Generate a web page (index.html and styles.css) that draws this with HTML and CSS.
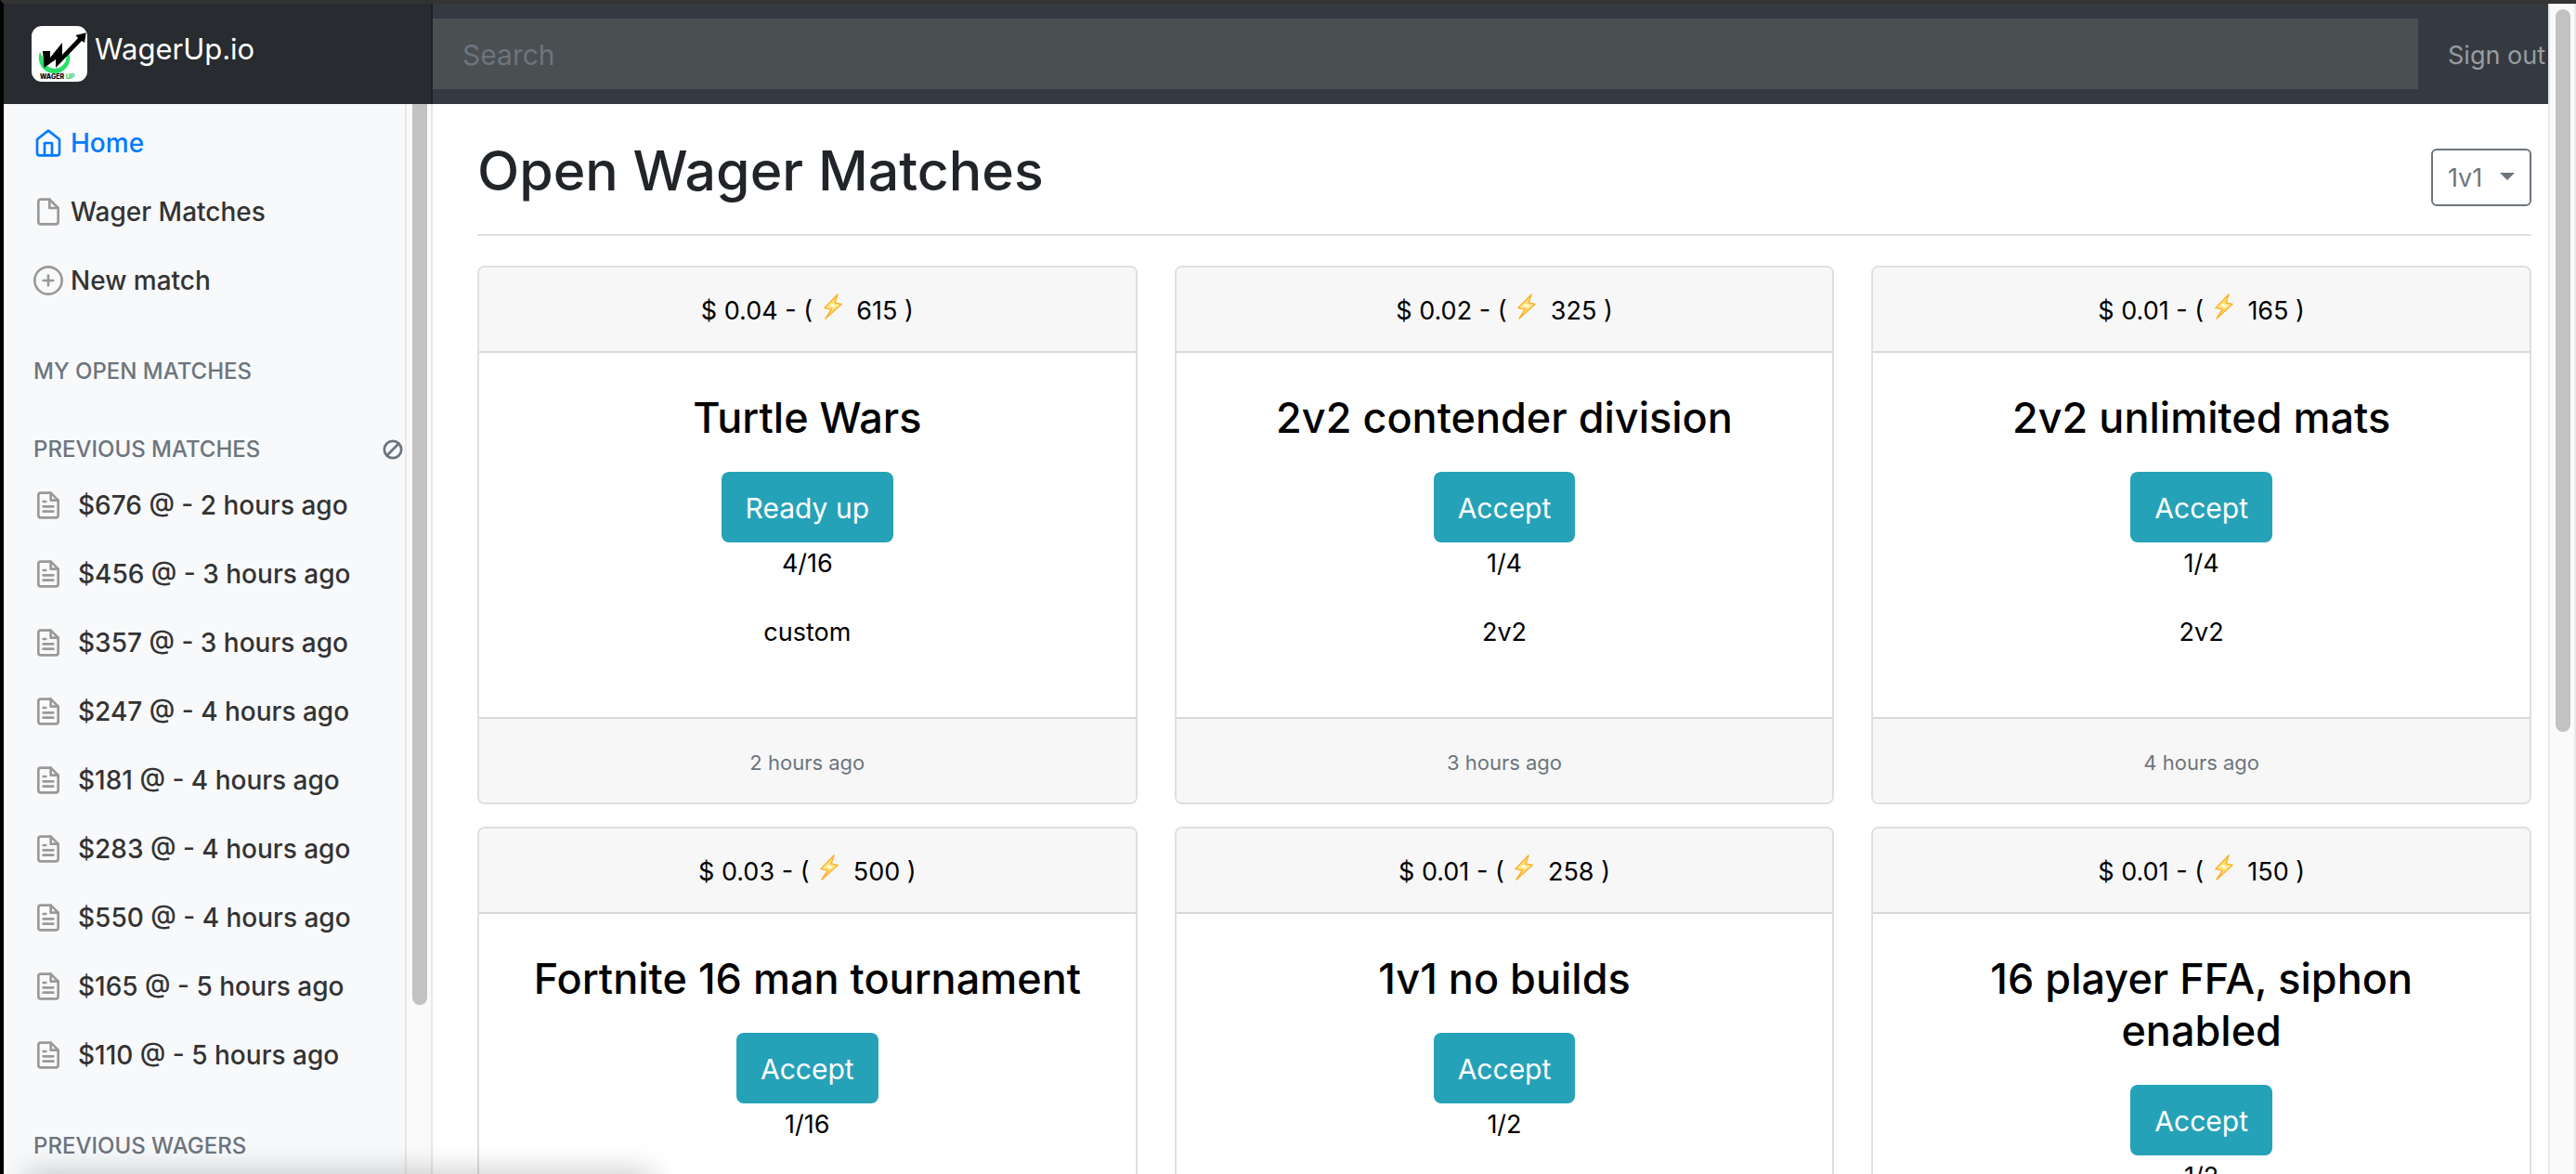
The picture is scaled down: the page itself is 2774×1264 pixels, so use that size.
FILE: index.html
```html
<!DOCTYPE html>
<html lang="en">
<head>
<meta charset="utf-8">
<title>WagerUp.io</title>
<link rel="stylesheet" href="styles.css">
</head>
<body>
<svg class="sprite" aria-hidden="true">
  <symbol id="i-home" viewBox="0 0 24 24"><path d="M3 9l9-7 9 7v11a2 2 0 0 1-2 2H5a2 2 0 0 1-2-2z"/><path d="M9 22V12h6v10"/></symbol>
  <symbol id="i-file" viewBox="0 0 24 24"><path d="M13 2H6a2 2 0 0 0-2 2v16a2 2 0 0 0 2 2h12a2 2 0 0 0 2-2V9z"/><path d="M13 2v7h7"/></symbol>
  <symbol id="i-plus" viewBox="0 0 24 24"><circle cx="12" cy="12" r="11"/><path d="M12 8v8M8 12h8"/></symbol>
  <symbol id="i-text" viewBox="0 0 24 24"><path d="M14 2H6a2 2 0 0 0-2 2v16a2 2 0 0 0 2 2h12a2 2 0 0 0 2-2V8z"/><path d="M14 2v6h6M16 13H8M16 17H8M10 9H8"/></symbol>
  <symbol id="i-slash" viewBox="0 0 24 24"><circle cx="12" cy="12" r="10"/><path d="M19 5L5 19"/></symbol>
  <symbol id="i-bolt" viewBox="0 0 20 28"><path d="M15 1L1 15.500l7.500 1.500L2 27 19 11.500l-7-1.500z" fill="#fff0a0" stroke="#fbb02d" stroke-width="1.500" stroke-linejoin="round"/><path d="M12 6l-6 8 5 1.500-3 5 6-7.500-4-2z" fill="#fffbe0" stroke="#ffd95a" stroke-width="1"/></symbol>
</svg>
<div class="window">
  <header class="navbar">
    <a class="brand" href="#">
      <svg class="logo" viewBox="0 0 60 60" role="img" aria-label="Wager Up">
        <rect width="60" height="60" rx="11" fill="#fff"/>
        <path d="M9 28a16.800 16.800 0 1 0 31.500 1l-3 3a12.500 12.500 0 1 1-25.500 2z" fill="#27e06a"/>
        <path d="M12 27h8v7l13-16v13l17-18-2.500-3 11.200-2.700L57 18l-3-2-28 29v-9L13.500 45z" fill="#000"/>
        <text x="9" y="57" class="logo-text">WAGER <tspan fill="#2fd472">UP</tspan></text>
      </svg>
      <span>WagerUp.io</span>
    </a>
    <input class="search" type="text" placeholder="Search" aria-label="Search">
    <a class="signout" href="#">Sign out</a>
  </header>
  <nav class="sidebar">
    <div class="sidebar-content">
      <ul class="menu">
        <li><a class="item active" href="#"><svg><use href="#i-home"/></svg>Home</a></li>
        <li><a class="item" href="#"><svg><use href="#i-file"/></svg>Wager Matches</a></li>
        <li><a class="item" href="#"><svg><use href="#i-plus"/></svg>New match</a></li>
      </ul>
      <h6 class="group">My open matches</h6>
      <h6 class="group">Previous matches<a href="#" aria-label="Clear"><svg><use href="#i-slash"/></svg></a></h6>
      <ul class="menu history">
        <li><a class="item" href="#"><svg><use href="#i-text"/></svg>$676 @ - 2 hours ago</a></li>
        <li><a class="item" href="#"><svg><use href="#i-text"/></svg>$456 @ - 3 hours ago</a></li>
        <li><a class="item" href="#"><svg><use href="#i-text"/></svg>$357 @ - 3 hours ago</a></li>
        <li><a class="item" href="#"><svg><use href="#i-text"/></svg>$247 @ - 4 hours ago</a></li>
        <li><a class="item" href="#"><svg><use href="#i-text"/></svg>$181 @ - 4 hours ago</a></li>
        <li><a class="item" href="#"><svg><use href="#i-text"/></svg>$283 @ - 4 hours ago</a></li>
        <li><a class="item" href="#"><svg><use href="#i-text"/></svg>$550 @ - 4 hours ago</a></li>
        <li><a class="item" href="#"><svg><use href="#i-text"/></svg>$165 @ - 5 hours ago</a></li>
        <li><a class="item" href="#"><svg><use href="#i-text"/></svg>$110 @ - 5 hours ago</a></li>
      </ul>
      <h6 class="group">Previous wagers</h6>
    </div>
    <div class="track"><div class="thumb"></div></div>
  </nav>
  <main class="main">
    <div class="page-head">
      <h1>Open Wager Matches</h1>
      <div class="mode">
        <select aria-label="Match type"><option>1v1</option></select>
      </div>
    </div>
    <div class="cards">
      <article class="card">
        <div class="card-header">$ 0.04 - ( <svg class="bolt"><use href="#i-bolt"/></svg> 615 )</div>
        <div class="card-body"><h4>Turtle Wars</h4><button type="button">Ready up</button><p>4/16</p><p>custom</p></div>
        <div class="card-footer">2 hours ago</div>
      </article>
      <article class="card">
        <div class="card-header">$ 0.02 - ( <svg class="bolt"><use href="#i-bolt"/></svg> 325 )</div>
        <div class="card-body"><h4>2v2 contender division</h4><button type="button">Accept</button><p>1/4</p><p>2v2</p></div>
        <div class="card-footer">3 hours ago</div>
      </article>
      <article class="card">
        <div class="card-header">$ 0.01 - ( <svg class="bolt"><use href="#i-bolt"/></svg> 165 )</div>
        <div class="card-body"><h4>2v2 unlimited mats</h4><button type="button">Accept</button><p>1/4</p><p>2v2</p></div>
        <div class="card-footer">4 hours ago</div>
      </article>
      <article class="card">
        <div class="card-header">$ 0.03 - ( <svg class="bolt"><use href="#i-bolt"/></svg> 500 )</div>
        <div class="card-body"><h4>Fortnite 16 man tournament</h4><button type="button">Accept</button><p>1/16</p></div>
      </article>
      <article class="card">
        <div class="card-header">$ 0.01 - ( <svg class="bolt"><use href="#i-bolt"/></svg> 258 )</div>
        <div class="card-body"><h4>1v1 no builds</h4><button type="button">Accept</button><p>1/2</p></div>
      </article>
      <article class="card">
        <div class="card-header">$ 0.01 - ( <svg class="bolt"><use href="#i-bolt"/></svg> 150 )</div>
        <div class="card-body"><h4>16 player FFA, siphon enabled</h4><button type="button">Accept</button><p>1/2</p></div>
      </article>
    </div>
  </main>
  <div class="track page-track"><div class="thumb"></div></div>
</div>
<div class="dock-shadow"></div>
</body>
</html>
```
FILE: styles.css
```css
* { box-sizing: border-box; }
body {
  margin: 0;
  height: 100vh;
  overflow: hidden;
  background: #fff;
  color: #212529;
  font: 400 27px/42px Inter, "Liberation Sans", sans-serif;
}
a { color: inherit; text-decoration: none; }
h1, h4, h6, p, ul { margin: 0; padding: 0; font-weight: 500; }
ul { list-style: none; }
svg { fill: none; stroke: currentColor; stroke-width: 2; stroke-linecap: round; stroke-linejoin: round; }
.sprite { display: none; }

.window {
  display: grid;
  grid-template: 108px 1fr / 462px 1fr 30px;
  height: 100vh;
  overflow: hidden;
  border-top: 4px solid #333;
  border-left: 4px solid #000;
}

.navbar {
  grid-column: 1 / 3;
  display: grid;
  grid-template-columns: 462px 1fr auto;
  align-items: center;
  background: #353a42;
}
.brand {
  display: flex;
  align-self: stretch;
  gap: 8px;
  padding: 24px 30px;
  background: #282b2f;
  box-shadow: inset -2px 0 0 #1d2024;
  color: #fff;
  font-size: 31px;
  line-height: 50px;
}
.logo { width: 60px; height: 60px; stroke: none; }
.logo-text { font: 800 7px Inter, sans-serif; fill: #000; }
.search {
  width: 100%;
  height: 76px;
  padding: 2px 32px 0;
  border: 0;
  background: #4a4f52;
  color: #fff;
  font: inherit;
  font-size: 30px;
}
.search::placeholder { color: #6c757d; opacity: 1; }
.signout { padding: 4px 3px 0 32px; color: #999c9f; }

.sidebar {
  grid-column: 1;
  display: grid;
  grid-template-columns: 1fr 30px;
  min-height: 0;
  overflow: hidden;
  background: #f8f9fb;
}
.sidebar-content { padding-top: 4px; }
.item {
  display: flex;
  align-items: center;
  gap: 8px;
  padding: 17px 32px 15px;
  color: #333;
  font-size: 28px;
  font-weight: 500;
  white-space: nowrap;
}
.item svg { width: 32px; height: 32px; color: #999; }
.item.active, .item.active svg { color: #007bff; }
.history .item { gap: 16px; }
.group {
  display: flex;
  justify-content: space-between;
  align-items: center;
  margin: 48px 0 8px;
  padding: 0 2px 0 32px;
  color: #6c757d;
  font-size: 24px;
  line-height: 28px;
  text-transform: uppercase;
}
.group + .group { margin-top: 56px; }
.group a { display: flex; }
.group svg { width: 22px; height: 22px; stroke-width: 3; }

.track {
  padding: 0 4px 0 6px;
  border: solid #e8e8e8;
  border-width: 0 2px;
  background: #fafafa;
}
.thumb { width: 16px; height: 970px; border-radius: 0 0 8px 8px; background: #c2c2c2; }
.page-track { grid-area: 1 / 3 / 3 / 4; padding-top: 6px; }
.page-track .thumb { height: 778px; border-radius: 8px; }

.main { grid-column: 2; min-width: 0; padding: 32px 18px 0 48px; }
.page-head {
  display: flex;
  justify-content: space-between;
  align-items: flex-start;
  height: 110px;
  margin-bottom: 32px;
  border-bottom: 2px solid #dee2e6;
}
h1 { font-size: 59px; line-height: 80px; }
.mode { position: relative; margin-top: 16px; color: #6c757d; }
.mode::after {
  content: "";
  position: absolute;
  right: 18px;
  top: 26px;
  border: 8px solid transparent;
  border-top-color: currentColor;
  border-bottom: 0;
  pointer-events: none;
}
.mode select {
  appearance: none;
  width: 108px;
  height: 62px;
  padding: 2px 16px 0;
  border: 2px solid currentColor;
  border-radius: 6px;
  background: #fff;
  color: inherit;
  font: inherit;
}

.cards { display: grid; grid-template-columns: repeat(3, 1fr); gap: 24px 40px; color: #000; text-align: center; }
.card { border: 2px solid #dfdfdf; border-radius: 8px; overflow: hidden; }
.card-header, .card-footer { padding: 26px 40px 22px; background: #f7f7f7; }
.card-header { border-bottom: 2px solid #d8d8d8; }
.card-footer { border-top: 2px solid #d8d8d8; color: #6c757d; font-size: 22px; }
.bolt { width: 20px; height: 28px; margin: 0 8px 0 4px; }
.card-body { padding: 40px; }
.card-body h4 { padding-top: 2px; margin-bottom: 30px; font-size: 45px; line-height: 56px; }
.card-body button {
  display: block;
  height: 76px;
  margin: 0 auto;
  padding: 2px 26px 0;
  border: 0;
  border-radius: 8px;
  background: #26a2b8;
  color: #fff;
  font: inherit;
  font-size: 30px;
}
.card-body p { padding-top: 2px; margin-bottom: 30px; font-weight: 400; }

.dock-shadow {
  position: absolute;
  left: 30px;
  top: 100%;
  width: 670px;
  height: 40px;
  box-shadow: 0 0 32px 2px rgba(0, 0, 0, .22);
}
```
